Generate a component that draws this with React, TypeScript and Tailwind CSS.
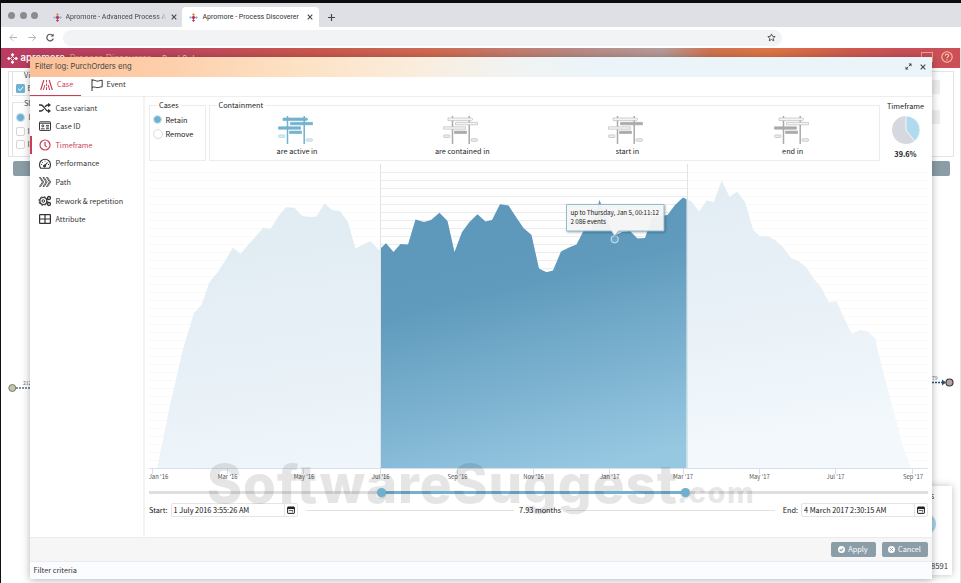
import type { ReactNode } from "react";

const AREA =
  "157,468 169,410 183,349 194,313 201.5,305 209.5,282 217,273 225,261 233,247.5 240.5,254 248,245 263.5,227.5 270.5,229 279,215.5 286,207.3 294.5,207.8 302.5,216 310,217 316.5,216.5 324.5,203.3 332,210 340,211 348,222 355.5,248.5 370.5,241 379,250 386,243.3 393.5,252 400.5,244 408,244.5 415.5,219.5 424,222 431,220 439.5,212.8 447.5,221 454.5,252 462,232 469.5,222 477.5,214.3 485.5,221.5 492,220 500,204.3 508.5,205.5 516,217 523.5,228 531.5,235 539,268.5 546.5,272.3 553,270.5 561,251.5 569,247.5 576.5,244.5 584,230 591.5,229 599.5,200 607,220 614.7,236 622,232 630,231 637.5,238.5 645,238 652,218 660,216 667.5,215 675,205 683,197.5 691.5,201.5 699,211.5 706.5,200.5 714,202 721.7,180 729.5,197 737,191.5 745,202 753,229.5 760,236.5 767.5,236 775,240 783,247 791,258 798.5,261 806,267 814,279 821.5,288 829,302.5 836.5,301 844,318 852,334 859.5,330 867,331 875.5,339 877.5,350 892,405 904,450 911,468";

const TICKS: [string, number, number][] = [
  ["Jan '16", 152.5, 158.5],
  ["Mar '16", 227.5, 227.7],
  ["May '16", 303.5, 304],
  ["Jul '16", 380.5, 380.7],
  ["Sep '16", 457.5, 457.5],
  ["Nov '16", 533.5, 533.5],
  ["Jan '17", 609.5, 609.7],
  ["Mar '17", 683.5, 683],
  ["May '17", 759.5, 759.5],
  ["Jul '17", 835.5, 835.5],
  ["Sep '17", 912.5, 913],
];

const GRID = Array.from({ length: 37 }, (_, i) => 172.5 + i * 8);

function Logo({ mono = false, size = 10 }: { mono?: boolean; size?: number }) {
  const c = mono ? ["#fff", "#fff", "#fff", "#fff"] : ["#e58a4e", "#7fc0de", "#c8324e", "#8ec6df"];
  return (
    <svg width={size} height={size} viewBox="0 0 12 12" className="shrink-0">
      <path d="M6 0l2 2-2 2-2-2z" fill={c[0]} />
      <path d="M12 6l-2 2-2-2 2-2z" fill={c[1]} />
      <path d="M6 12l2-2-2-2-2 2z" fill={c[2]} />
      <path d="M0 6l2 2 2-2-2-2z" fill={c[3]} />
      <path
        d="M6 3.800L8.200 6 6 8.200 3.800 6z"
        fill={mono ? "none" : "#b42d55"}
        stroke={mono ? "#fff" : "#b42d55"}
        strokeWidth=".9"
      />
    </svg>
  );
}

function Cross({ className = "" }: { className?: string }) {
  return (
    <svg width="6" height="6" viewBox="0 0 6 6" className={`shrink-0 ${className}`}>
      <path d="M.7.7l4.6 4.6M5.3.7L.7 5.3" stroke="currentColor" strokeWidth="1.1" />
    </svg>
  );
}

function BrowserChrome() {
  return (
    <>
      <div className="h-[3px] bg-[#0c0c0c]" />
      <div className="flex h-6 items-end bg-[#dee0e5] text-[7px] text-[#45474b]">
        <div className="mb-[8px] ml-[7px] flex gap-[4.5px]">
          <i className="size-[7px] rounded-full bg-[#8a8b8e]" />
          <i className="size-[7px] rounded-full bg-[#8a8b8e]" />
          <i className="size-[7px] rounded-full bg-[#8a8b8e]" />
        </div>
        <div className="ml-[14.5px] flex h-5 w-[129px] items-center">
          <Logo size={9} />
          <span className="ml-[4px] w-[101px] overflow-hidden whitespace-nowrap font-['Roboto',sans-serif] [mask-image:linear-gradient(90deg,#000_90%,transparent)]">
            Apromore - Advanced Process A
          </span>
          <Cross className="ml-[4px]" />
        </div>
        <div className="flex h-5 w-[137px] items-center rounded-t-[4px] bg-white pl-[7px]">
          <Logo size={9} />
          <span className="ml-[5px] w-[97px] whitespace-nowrap font-['Roboto',sans-serif] text-[#303236]">
            Apromore - Process Discoverer
          </span>
          <Cross className="ml-[7px]" />
        </div>
        <svg width="7" height="7" viewBox="0 0 7 7" className="mb-[6px] ml-[9.5px]">
          <path d="M3.5 0v7M0 3.5h7" stroke="#45474b" strokeWidth="1.2" />
        </svg>
      </div>
      <div className="flex h-[21px] items-center bg-white">
        <svg width="60" height="12" viewBox="0 0 60 12" fill="none" strokeWidth="1">
          <path d="M16 5.500H9M12 2.300L8.900 5.500l3.100 3.200M27.500 5.500h7M31.500 2.300l3.200 3.200-3.200 3.200" stroke="#b2b4b8" />
          <path d="M51.800 3.600A3.300 3.300 0 1 0 52.300 6.500" stroke="#55575b" strokeWidth="1.200" />
          <path d="M52.700 1.400v3.200h-3.200z" fill="#55575b" />
        </svg>
        <div className="ml-[1.500px] flex h-4 w-[719px] items-center justify-end rounded-full bg-[#f1f3f5] pr-[5.500px]">
          <svg width="9" height="9" viewBox="0 0 24 24" fill="none" stroke="#55575b" strokeWidth="2.600">
            <path d="M12 2.500l2.800 6.400 7 .6-5.300 4.600 1.600 6.900-6.100-3.700L5.900 21l1.600-6.900L2.200 9.500l7-.6z" />
          </svg>
        </div>
      </div>
    </>
  );
}

function PageBehind() {
  return (
    <div className="flex-1 overflow-hidden border-r border-[#e2e2e2]">
      <div className="flex h-5 items-center bg-[linear-gradient(90deg,#b93c62_0%,#bd4560_16%,#c9574f_32%,#cf6a52_45%,#b98a84_60%,#b59b98_69%,#d0724f_74%,#dc7645_80%,#cf5c4e_88%,#c94f58_94%,#cb5058_100%)] pl-[6px] text-white">
        <Logo mono size={11} />
        <span className="ml-[2.500px] font-['Inter',sans-serif] text-[9.500px] font-semibold leading-none">apromore</span>
        <span className="ml-[5px] font-['Inter',sans-serif] text-[8.800px] leading-none text-[#efa27e]">Process Discoverer</span>
        <span className="ml-[7px] font-['Inter',sans-serif] text-[7px] font-semibold leading-none text-[#f3b9a8]">› PurchOrders eng</span>
        <div className="mb-[2px] ml-auto mr-[7.500px] flex items-center gap-[8px]">
          <i className="h-[10px] w-3 border border-[#f0a58a]" />
          <svg width="12" height="12" viewBox="0 0 12 12" fill="none" stroke="#f7c59f" strokeWidth="1.100">
            <circle cx="6" cy="6" r="5.200" />
            <path d="M4.300 4.700c.1-2.300 3.500-2.100 3.400-.2C7.700 5.700 6 5.800 6 7.200M6 8.200v1.200" strokeWidth="1.200" />
          </svg>
        </div>
      </div>
      <div className="flex justify-between pl-[7px] pr-[6px] pt-[3px] text-[7.300px] leading-none text-[#444]">
        <div className="w-[60px]">
          <div className="flex h-[86px] flex-col border border-[#e4e4e4] pl-[3px]">
            <div className="h-[24px] border-b border-l border-[#e4e4e4] pl-[11px]">
              <span>View</span>
              <div className="-ml-[8.500px] mt-[5px] flex items-center gap-[3px]">
                <svg width="9" height="9" viewBox="0 0 9 9" className="shrink-0">
                  <rect width="9" height="9" rx="1.500" fill="#6db2d2" />
                  <path d="M2 4.700l2 1.900 3.200-3.900" fill="none" stroke="#fff" />
                </svg>
                Event
              </div>
            </div>
            <div className="mt-[6px] h-[54px] border-l border-t border-[#e4e4e4] pl-[11px]">
              <div className="-mt-[3px] bg-white">Slider</div>
              <div className="-ml-[8.500px] mt-[6px] flex items-center gap-[4px]">
                <i className="size-[9px] rounded-full border border-[#c8dfeb] bg-[#6db2d2]" />Linear
              </div>
              <div className="-ml-[8.500px] mt-[5px] flex items-center gap-[3px]">
                <i className="size-[9px] rounded-[2px] border border-[#d5d5d5]" />Inv
              </div>
              <div className="-ml-[8.500px] mt-[4px] flex items-center gap-[3px]">
                <i className="size-[9px] rounded-[2px] border border-[#d5d5d5]" />Inv
              </div>
            </div>
          </div>
          <div className="ml-[4.500px] mt-[4px] h-[15px] rounded-[2px] bg-[#8b9da7]" />
        </div>
        <div className="w-[60px]">
          <div className="flex h-[86px] flex-col items-end gap-4 border border-[#e4e4e4] pr-[13px] pt-[8px]">
            <div className="h-[14px] w-10 bg-[#efefef]" />
            <div className="h-[14px] w-10 bg-[#efefef]" />
          </div>
          <div className="mr-[4px] mt-[4px] h-[15px] rounded-[2px] bg-[#8b9da7]" />
        </div>
      </div>
      <div className="mt-[197px] flex justify-between pl-[5px] pr-[6px]">
        <svg width="40" height="24" viewBox="0 0 40 24">
          <path d="M10 15h30" stroke="#4f718c" strokeWidth="1.300" strokeDasharray="2 1" />
          <circle cx="6.300" cy="15" r="3.500" fill="#c2c6a5" stroke="#777b70" />
          <text x="17" y="12" fontSize="5" fill="#54758e">212</text>
        </svg>
        <svg width="40" height="24" viewBox="0 0 40 24">
          <path d="M0 9.500h31" stroke="#35536e" strokeWidth="1.300" strokeDasharray="2 1" />
          <path d="M28 6.500l4 3-4 3z" fill="#35536e" />
          <circle cx="35.500" cy="9.500" r="3.500" fill="#b9a0a0" stroke="#3a3a3a" strokeWidth="1.200" />
          <text x="18" y="6.500" fontSize="5" fill="#54758e">79</text>
        </svg>
      </div>
      <div className="ml-auto mr-[8px] mt-[89px] flex h-[89px] w-[90px] flex-col items-end bg-white pr-[4px] pt-[6px] text-[7.700px] leading-none text-[#333] shadow-[0_0_7px_rgba(0,0,0,0.25)]">
        <span className="mr-[14px]">Cases</span>
        <i className="mr-[12px] mt-[13px] size-[22px] rounded-full bg-[#a9d7ec]" />
        <span className="mt-[27px]">8591</span>
      </div>
    </div>
  );
}

function NavIcon({ name }: { name: string }) {
  const shapes: Record<string, ReactNode> = {
    "Case variant": (
      <>
        <path d="M0 2h2.200c2.600 0 4 6 6.600 6h2M0 8h2.200c1 0 1.700-.9 2.400-2M6 4c.8-1.300 1.600-2 2.800-2h2" strokeWidth="1.300" />
        <path d="M9 .3L11.500 2 9 3.800M9 6.200L11.500 8 9 9.800" fill="currentColor" strokeWidth=".7" />
      </>
    ),
    "Case ID": (
      <>
        <rect x=".5" y=".8" width="11" height="8.600" rx=".6" />
        <path d="M.5 2.300h11M7 4.400h3M7 6h3M7 7.700h3M1.900 7.800h3.800" strokeWidth=".9" />
        <circle cx="3.800" cy="4.900" r="1" />
      </>
    ),
    Timeframe: (
      <>
        <circle cx="6" cy="5" r="5" strokeWidth="1.200" />
        <path d="M6 1.900v3.400l1.800 1.900" strokeWidth="1.200" />
      </>
    ),
    Performance: (
      <>
        <path d="M1.800 9.300A5.500 5.500 0 1 1 10.200 9.300z" strokeWidth="1.100" />
        <path d="M5.500 6.900l3-3.400M2.100 5.500h.9M3.200 3.100l.6.600M6 1.700v.9M9 5.500h1" strokeWidth="1.100" />
        <circle cx="5.600" cy="7" r="1.100" fill="currentColor" />
      </>
    ),
    Path: (
      <path
        d="M.500.500h1.200l3 4.500-3 4.500H.500l3-4.500zM4 .500h1.200l3 4.500-3 4.500H4l3-4.500zM7.500.500h1.200l3 4.500-3 4.500H7.500l3-4.500z"
        strokeWidth=".8"
      />
    ),
    "Rework & repetition": (
      <>
        <circle cx="4.300" cy="5" r="3.500" strokeWidth="1.200" />
        <circle cx="4.300" cy="5" r="1.300" />
        <circle cx="4.300" cy="5" r="4.400" strokeWidth="1" strokeDasharray="1.730 1.730" />
        <circle cx="10" cy="2" r="1.500" strokeWidth="1.300" />
        <circle cx="10" cy="8" r="1.500" strokeWidth="1.300" />
      </>
    ),
    Attribute: (
      <>
        <rect x=".6" y=".6" width="10.800" height="8.800" rx=".5" strokeWidth="1.200" />
        <path d="M6 .6v8.800M.6 5h10.800" strokeWidth="1.200" />
      </>
    ),
  };
  return (
    <svg width="12" height="10" viewBox="0 0 12 10" fill="none" stroke="currentColor" className="shrink-0 overflow-visible">
      {shapes[name]}
    </svg>
  );
}

const NAV = ["Case variant", "Case ID", "Timeframe", "Performance", "Path", "Rework & repetition", "Attribute"];

function Sidebar() {
  return (
    <nav className="flex w-[115.500px] shrink-0 flex-col border-r-2 border-[#f3f3f3] pt-[2px] text-[7.300px] text-[#333]">
      {NAV.map((name) => (
        <div
          key={name}
          className={`flex h-[18.600px] items-center gap-[4.500px] border-l-2 pl-[7.500px] ${
            name === "Timeframe" ? "border-[#cc3d55] text-[#cc3d55]" : "border-transparent"
          }`}
        >
          <NavIcon name={name} />
          <span className="pt-px">{name}</span>
        </div>
      ))}
    </nav>
  );
}

// filled lists the four long planks, top to bottom, that are highlighted
function Signpost({ label, filled, color }: { label: string; filled: boolean[]; color: string }) {
  const active = color === "#73b2cf";
  const plank = (on: boolean) => ({ fill: on ? color : "#f4f4f4", stroke: on ? color : "#bdbdbd" });
  const small = { fill: active ? "#d8ebf4" : "#ececec", stroke: active ? "#abd2e4" : "#bdbdbd" };
  return (
    <div className="flex w-[165.200px] flex-col items-center">
      <svg width="36" height="29" viewBox="0 0 36 29" strokeWidth=".7" className="mr-[4px]">
        <path d="M10.500 0v28M27.200 0v28" stroke={color} strokeWidth="1.500" />
        <path d="M6 2h23.500l1.500 1.300-1.500 1.300H6z" {...plank(filled[0])} />
        <path d="M13.500 6.400h22v2.400h-22z" {...plank(filled[1])} />
        <path d="M1.500 10.800h22v2.400h-22z" {...plank(filled[2])} />
        <path d="M12.500 15.100h12v2.400h-12z" {...plank(filled[3])} />
        <rect x="1.500" y="18.900" width="6.500" height="2.600" rx="1" {...small} />
        <rect x="29" y="22.700" width="6.500" height="2.600" rx="1" {...small} />
      </svg>
      <span className="mt-[1px] leading-[10px] text-[#222]">{label}</span>
    </div>
  );
}

function Options() {
  return (
    <div className="flex h-[64.500px] pl-[4px] text-[7.300px] text-[#222]">
      <fieldset className="mt-[3px] h-[61.500px] w-[57px] border border-[#ececec] pl-[2.500px]">
        <legend className="ml-[4px] px-[2.500px] leading-[11px]">Cases</legend>
        <div className="mt-[2px] flex h-[14px] items-center gap-[4px] text-[7.400px]">
          <i className="size-[9px] rounded-full border border-[#dcebf3] bg-[#6db2d2]" />
          <span className="pt-px">Retain</span>
        </div>
        <div className="flex h-[14px] items-center gap-[3px] text-[7.400px]">
          <i className="size-[10px] rounded-full border border-[#dcdcdc]" />
          <span className="pt-px">Remove</span>
        </div>
      </fieldset>
      <fieldset className="ml-[2.500px] mt-[3px] h-[61.500px] w-[671px] border border-[#ececec]">
        <legend className="ml-[7px] px-[2px] leading-[11px]">Containment</legend>
        <div className="flex pl-[5px] pt-[5px]">
          <Signpost label="are active in" filled={[true, true, true, true]} color="#73b2cf" />
          <Signpost label="are contained in" filled={[false, false, false, true]} color="#aaaaaa" />
          <Signpost label="start in" filled={[false, true, false, true]} color="#aaaaaa" />
          <Signpost label="end in" filled={[false, false, true, true]} color="#aaaaaa" />
        </div>
      </fieldset>
      <div className="flex w-[52px] flex-col items-center pt-[4px]">
        <span className="leading-[10px]">Timeframe</span>
        <svg width="30" height="30" viewBox="-15 -15 30 30" className="mt-[4px]">
          <circle r="14" fill="#d5d9df" />
          <path d="M0 0V-14A14 14 0 0 1 8.500 11.100z" fill="#b0daee" stroke="#fff" strokeWidth=".8" />
        </svg>
        <span className="mt-[4.500px] font-bold leading-[10px]">39.6%</span>
      </div>
    </div>
  );
}

function Chart() {
  return (
    <svg width="783" height="322" viewBox="145 161 783 322" className="block shrink-0">
      <defs>
        <linearGradient id="area" gradientUnits="userSpaceOnUse" x1="500" y1="240" x2="560" y2="478">
          <stop offset="0" stopColor="#5e99bb" />
          <stop offset=".2" stopColor="#609bbd" />
          <stop offset="1" stopColor="#97c8e2" />
        </linearGradient>
        <linearGradient id="faded" gradientUnits="userSpaceOnUse" x1="500" y1="220" x2="535" y2="468">
          <stop offset="0" stopColor="#e2edf3" />
          <stop offset=".6" stopColor="#eaf2f8" />
          <stop offset="1" stopColor="#f2f8fc" />
        </linearGradient>
        <clipPath id="selected">
          <path d="M381 161h305.500v308H381z" />
        </clipPath>
      </defs>
      {GRID.map((y) => (
        <path key={y} d={`M149 ${y}h779`} stroke="#f9f9f9" />
      ))}
      {GRID.map((y) => (
        <path key={y} d={`M381 ${y}h306`} stroke="#ececec" />
      ))}
      <polygon points={AREA} fill="url(#faded)" />
      <polygon points={AREA} fill="url(#area)" clipPath="url(#selected)" />
      <path d="M380.500 164v304M687.500 164v304" stroke="#dfe3e5" />
      <path d="M149 468.500h779" stroke="#d5e1f0" />
      {TICKS.map(([label, x, center]) => (
        <g key={label}>
          <path d={`M${x} 469v5`} stroke="#d5e1f0" />
          <text x={center} y="479" textAnchor="middle" fontSize="5.900" fill="#555">
            {label}
          </text>
        </g>
      ))}
      <circle cx="614.700" cy="239.300" r="3.500" fill="#6fa9c8" stroke="#b8dcec" strokeWidth="1.200" />
      <path
        d="M566.500 204.500h97.500v26.500H618.500L614.500 236 611.500 231H566.500z"
        fill="#f9f9f9"
        fillOpacity=".94"
        stroke="#8fbed3"
        className="drop-shadow-[1px_1px_1px_rgba(0,0,0,0.3)]"
      />
      <text x="570.500" y="215.300" fontSize="6.300" fill="#222" textLength="88.500">
        up to Thursday, Jan 5, 00:11:12
      </text>
      <text x="570.500" y="224" fontSize="6.300" fill="#222" textLength="35.500">
        2 086 events
      </text>
    </svg>
  );
}

function DateField({ label, value }: { label: string; value: string }) {
  return (
    <div className="flex items-center text-[7.300px] text-[#111]">
      <span className="pt-px">{label}</span>
      <div className="ml-[3px] flex h-[14px] w-[127px] items-center rounded-[2px] border border-[#e4e4e4]">
        <span className="flex-1 whitespace-nowrap pl-[2px] pt-px">{value}</span>
        <span className="flex h-full w-[13px] items-center justify-center border-l border-[#e4e4e4]">
          <svg width="8" height="8" viewBox="0 0 8 8">
            <rect x=".6" y="1" width="6.800" height="6.400" rx=".5" fill="#f4f4f4" stroke="#222" />
            <path d="M.6 2h6.800" stroke="#222" strokeWidth="2" />
            <path d="M2 4.500h4M5 5.800h1" stroke="#555" strokeWidth=".9" />
          </svg>
        </span>
      </div>
    </div>
  );
}

function RangeControls() {
  return (
    <div className="-mt-[.5px] px-[4px]">
      <div className="flex h-5 items-center">
        <div className="h-[3px] w-[228px] bg-[#dfdfdf]" />
        <i className="z-10 size-[9px] rounded-full bg-[#6fb0ce] shadow-[0_1px_2px_rgba(0,0,0,0.25)]" />
        <div className="-mx-[2px] h-[3px] w-[299px] bg-[#72b2cf]" />
        <i className="z-10 size-[9px] rounded-full bg-[#6fb0ce] shadow-[0_1px_2px_rgba(0,0,0,0.25)]" />
        <div className="h-[3px] flex-1 bg-[#dfdfdf]" />
      </div>
      <div className="flex h-[15.500px] items-center">
        <DateField label="Start:" value="1 July 2016 3:55:26 AM" />
        <div className="ml-[8px] mr-[8px] flex flex-1 items-center gap-[5px] text-[7.300px] text-[#111]">
          <i className="h-px flex-1 bg-[#e2e2e2]" />
          <span className="pt-px">7.93 months</span>
          <i className="h-px flex-1 bg-[#e2e2e2]" />
        </div>
        <DateField label="End:" value="4 March 2017 2:30:15 AM" />
      </div>
    </div>
  );
}

function FilterDialog() {
  return (
    <section className="absolute left-[29.500px] top-[57px] flex h-[522px] w-[902.500px] flex-col bg-white shadow-[0_1px_8px_rgba(0,0,0,0.3)]">
      <header className="flex h-[19.500px] shrink-0 items-center bg-[linear-gradient(90deg,#fcc096_0%,#fdceaa_14%,#fde2c4_30%,#faeddd_43%,#f1f3f1_53%,#ebf4f9_63%,#ebf4f8_100%)] pl-[5.500px] pr-[6px] text-[#444]">
        <h1 className="flex-1 font-['Inter',sans-serif] text-[7.600px]">Filter log: PurchOrders eng</h1>
        <svg width="7" height="7" viewBox="0 0 7 7" className="mr-[8.500px]">
          <path d="M.5 6.500v-3l3 3zM6.500.5v3l-3-3z" fill="#444" />
          <path d="M1.500 5.500l4-4" stroke="#444" strokeDasharray="2.200 1" />
        </svg>
        <Cross />
      </header>
      <div className="flex h-5 shrink-0 border-b border-[#eeeeee] text-[7.300px]">
        <div className="flex w-[51px] items-center gap-[4.500px] border-b-[1.500px] border-[#cc3d55] pb-[1px] pl-[10px] text-[#cc3d55]">
          <svg width="13" height="10" viewBox="0 0 13 10" fill="none" stroke="currentColor">
            <path d="M3.800 0L.7 10M9.200 0l3.100 10" strokeWidth="1.200" />
            <path d="M4.800 5L3.400 10M8.200 5l1.400 5M6.500 0v2.300M6.500 3.500v2.300M6.500 7.200V10" strokeWidth="1" />
          </svg>
          Case
        </div>
        <div className="flex items-center gap-[4px] pb-[2px] pl-[10px] text-[#333]">
          <svg width="12" height="12" viewBox="0 0 12 12" fill="none" stroke="currentColor">
            <path d="M1 0v12M1 1.500c2.500-1.500 4 1.300 6.300.6 1.300-.4 2.500-.9 3.900-.9v6.600c-2-.1-3.600 1.200-5.400.8C4 8.300 2.600 7.500 1 8.500" />
          </svg>
          Event
        </div>
      </div>
      <div className="flex min-h-0 flex-1">
        <Sidebar />
        <main className="flex min-w-0 flex-1 flex-col">
          <Options />
          <Chart />
          <RangeControls />
        </main>
      </div>
      <footer className="flex h-[25px] shrink-0 items-center justify-end gap-[6px] border-y border-[#ebebeb] bg-[#f6f6f6] pr-[4.500px] text-[7.300px] text-white">
        <button className="flex h-[15px] w-[45px] items-center justify-center gap-[3px] rounded-[2px] bg-[#8b9da7]">
          <svg width="7" height="7" viewBox="0 0 7 7">
            <circle cx="3.500" cy="3.500" r="3.500" fill="#fff" />
            <path d="M1.800 3.500l1.300 1.300 2.200-2.500" fill="none" stroke="#8b9da7" strokeWidth="1.100" />
          </svg>
          <span className="pt-px">Apply</span>
        </button>
        <button className="flex h-[15px] w-[46px] items-center justify-center gap-[3px] rounded-[2px] bg-[#8b9da7]">
          <svg width="7" height="7" viewBox="0 0 7 7">
            <circle cx="3.500" cy="3.500" r="3.500" fill="#fff" />
            <path d="M2.200 2.200l2.600 2.600M4.800 2.200L2.200 4.800" stroke="#8b9da7" />
          </svg>
          <span className="pt-px">Cancel</span>
        </button>
      </footer>
      <div className="flex h-[17px] shrink-0 items-center bg-[#fafcff] pl-[4px] text-[7.300px] text-[#333]">
        Filter criteria
      </div>
    </section>
  );
}

export default function App() {
  return (
    <div className="relative flex h-[583px] w-[961px] flex-col overflow-hidden border-l border-[#111] bg-white font-['Noto_Sans_CJK_SC','Noto_Sans',sans-serif] leading-none">
      <BrowserChrome />
      <PageBehind />
      <div className="absolute -left-px top-0">
        <FilterDialog />
        <svg width="961" height="583" viewBox="0 0 961 583" className="pointer-events-none absolute left-0 top-0 max-w-none">
          <g fill="#000" fillOpacity=".1" fontFamily="Inter, sans-serif" fontWeight="800">
            <text x="207" y="502.500" fontSize="53" textLength="470">
              SoftwareSuggest
            </text>
            <text x="677" y="502.500" fontSize="29" textLength="77">
              .com
            </text>
          </g>
        </svg>
      </div>
    </div>
  );
}
